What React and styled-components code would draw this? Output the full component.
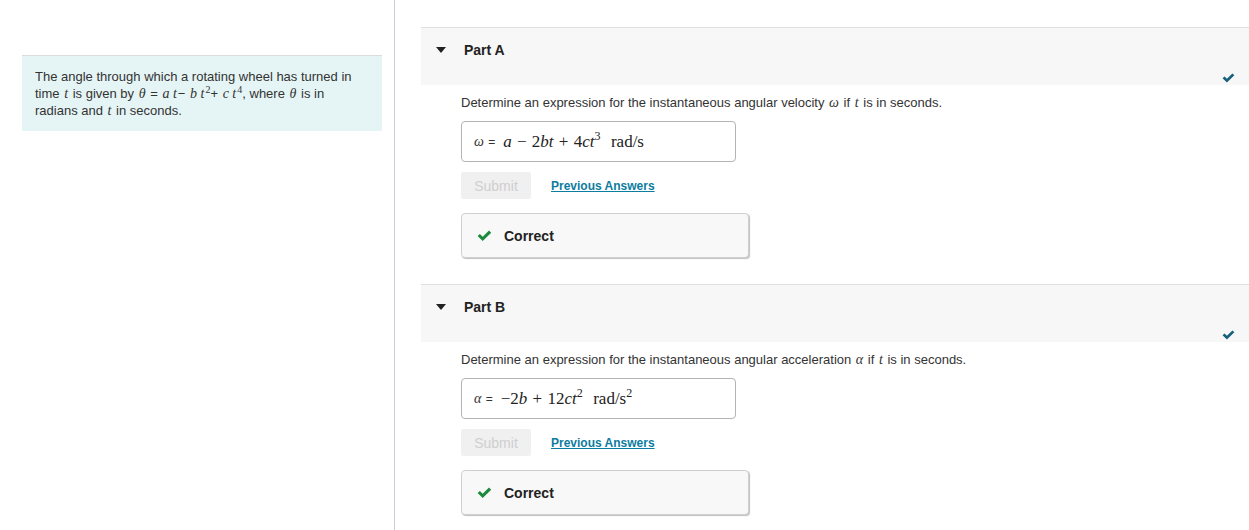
import styled, { createGlobalStyle } from 'styled-components';

const GlobalStyle = createGlobalStyle`
  html, body {
    margin: 0;
    padding: 0;
    background: #ffffff;
  }
  body {
    font-family: "Liberation Sans", Arial, sans-serif;
    font-size: 13px;
    color: #333333;
  }
`;

const Page = styled.div`
  display: flex;
  min-height: 530px;
`;

const LeftColumn = styled.div`
  width: 395px;
  flex-shrink: 0;
  border-right: 1px solid #c9ced6;
  padding: 55px 0 0 22px;
  box-sizing: border-box;
`;

const Intro = styled.div`
  width: 360px;
  height: 76px;
  background: #e5f5f5;
  border-top: 1px solid #dcdcdc;
  padding: 12px 13px 0 13px;
  box-sizing: border-box;
  font-size: 13px;
  line-height: 17px;
  color: #333;
`;

const Sup = styled.sup`
  font-family: "Liberation Serif", "Times New Roman", serif;
  font-size: 10px;
  line-height: 0;
  vertical-align: 5px;
`;

const RightColumn = styled.div`
  flex: 1;
  padding: 27px 0 0 26px;
`;

const Part = styled.section`
  margin-bottom: 26px;
`;

const PartHeader = styled.div`
  background: #f7f7f7;
  border-top: 1px solid #dfdfdf;
  height: 57px;
  display: grid;
  grid-template-rows: 1fr auto;
  padding: 0 14px 0 15px;
`;

const TitleRow = styled.div`
  display: flex;
  align-items: center;
  padding-top: 3px;
  height: 38px;
`;

const Caret = styled.span`
  width: 0;
  height: 0;
  border-left: 5px solid transparent;
  border-right: 5px solid transparent;
  border-top: 6px solid #222;
  margin-right: 18px;
`;

const Title = styled.span`
  font-weight: bold;
  font-size: 14px;
  color: #222;
`;

const StatusRow = styled.div`
  display: flex;
  justify-content: flex-end;
  padding-bottom: 2px;
`;

const PartBody = styled.div`
  padding-left: 40px;
`;

const Prompt = styled.p`
  margin: 10px 0 0 0;
  font-size: 13px;
  line-height: 15px;
  color: #333;
`;

const MathVar = styled.span`
  font-family: "Liberation Serif", "Times New Roman", serif;
  font-style: italic;
  font-size: 14px;
  padding: 0 1px;
`;

const AnswerBox = styled.div`
  margin-top: 11px;
  width: 275px;
  height: 41px;
  box-sizing: border-box;
  border: 1px solid #b4b4b4;
  border-radius: 4px;
  display: flex;
  align-items: center;
  padding-left: 11px;
  font-size: 12px;
  color: #333;
`;

const Expr = styled.span`
  font-family: "Liberation Serif", "Times New Roman", serif;
  font-size: 17px;
  color: #222;
  margin-left: 8px;
  word-spacing: 1px;

  i {
    font-style: italic;
  }
  sup {
    font-size: 12px;
    vertical-align: 7px;
    line-height: 0;
  }
`;

const Actions = styled.div`
  display: flex;
  align-items: center;
  margin-top: 10px;
  gap: 20px;
`;

const SubmitButton = styled.button`
  width: 70px;
  height: 27px;
  border: none;
  border-radius: 2px;
  background: #f0f0f0;
  color: #cfcfcf;
  font-family: "Liberation Sans", Arial, sans-serif;
  font-size: 14px;
  padding: 0;
  cursor: default;
`;

const PrevLink = styled.a`
  color: #0c7ca0;
  font-weight: bold;
  font-size: 12px;
  text-decoration: underline;
  cursor: pointer;
`;

const Feedback = styled.div`
  margin-top: 14px;
  width: 288px;
  height: 45px;
  box-sizing: border-box;
  background: #f8f8f8;
  border: 1px solid #cfcfcf;
  border-radius: 4px;
  box-shadow: 1px 1px 1px rgba(0, 0, 0, 0.25);
  display: flex;
  align-items: center;
  padding-left: 15px;
  gap: 12px;
  font-weight: bold;
  font-size: 14px;
  color: #222;
`;

const CheckIcon = ({ color, size = 14 }) => (
  <svg width={size} height={size * 0.8} viewBox="0 0 14 11">
    <path d="M0.6 5.6 L2.7 3.6 L5.3 6.1 L11.2 0.4 L13.3 2.4 L5.3 10.1 Z" fill={color} />
  </svg>
);

const parts = [
  {
    name: 'Part A',
    prompt: (
      <>
        Determine an expression for the instantaneous angular velocity <MathVar>ω</MathVar> if{' '}
        <MathVar>t</MathVar> is in seconds.
      </>
    ),
    symbol: 'ω',
    expr: (
      <>
        <i>a</i> − 2<i>bt</i> + 4<i>ct</i>
        <sup>3</sup>&nbsp;&nbsp;rad/s
      </>
    ),
  },
  {
    name: 'Part B',
    prompt: (
      <>
        Determine an expression for the instantaneous angular acceleration <MathVar>α</MathVar> if{' '}
        <MathVar>t</MathVar> is in seconds.
      </>
    ),
    symbol: 'α',
    expr: (
      <>
        −2<i>b</i> + 12<i>ct</i>
        <sup>2</sup>&nbsp;&nbsp;rad/s<sup>2</sup>
      </>
    ),
  },
];

const App = () => {
  return (
    <>
      <GlobalStyle />
      <Page>
        <LeftColumn>
          <Intro>
            The angle through which a rotating wheel has turned in time <MathVar>t</MathVar> is given
            by <MathVar>θ</MathVar> = <MathVar>a t</MathVar>− <MathVar>b t</MathVar>
            <Sup>2</Sup>+ <MathVar>c t</MathVar>
            <Sup>4</Sup>, where <MathVar>θ</MathVar> is in radians and <MathVar>t</MathVar> in
            seconds.
          </Intro>
        </LeftColumn>
        <RightColumn>
          {parts.map((part) => (
            <Part key={part.name}>
              <PartHeader>
                <TitleRow>
                  <Caret />
                  <Title>{part.name}</Title>
                </TitleRow>
                <StatusRow>
                  <CheckIcon color="#17607c" size={13} />
                </StatusRow>
              </PartHeader>
              <PartBody>
                <Prompt>{part.prompt}</Prompt>
                <AnswerBox>
                  <MathVar>{part.symbol}</MathVar>&nbsp;=
                  <Expr>{part.expr}</Expr>
                </AnswerBox>
                <Actions>
                  <SubmitButton>Submit</SubmitButton>
                  <PrevLink>Previous Answers</PrevLink>
                </Actions>
                <Feedback>
                  <CheckIcon color="#1b8a3c" size={15} />
                  Correct
                </Feedback>
              </PartBody>
            </Part>
          ))}
        </RightColumn>
      </Page>
    </>
  );
};

export default App;
